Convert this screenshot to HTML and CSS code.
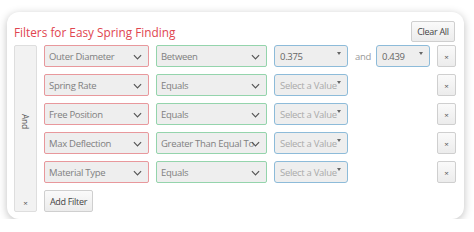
FILE: index.html
```html
<!DOCTYPE html>
<html lang="en">
<head>
    <meta charset="UTF-8">
    <title>Filters for Easy Spring Finding</title>
    <link rel="stylesheet" href="styles.css">
</head>
<body>
    <div class="card">
        <div class="card-head">
            <div class="title">Filters for Easy Spring Finding</div>
            <button class="btn clear-btn">Clear All</button>
        </div>

        <div class="filter-body">
            <!-- And / Or group bar -->
            <div class="group-bar">
                <span class="group-label">And</span>
                <span class="group-x">&times;</span>
            </div>

            <div class="rows">
                <div class="row">
                    <div class="sel field-sel">Outer Diameter<svg class="chev" viewBox="0 0 10 6"><path d="M1 1l4 4 4-4"/></svg></div>
                    <div class="sel op-sel">Between<svg class="chev" viewBox="0 0 10 6"><path d="M1 1l4 4 4-4"/></svg></div>
                    <div class="sel val-sel filled">0.375<span class="tri"></span></div>
                    <span class="and-txt">and</span>
                    <div class="sel val-sel small filled">0.439<span class="tri"></span></div>
                    <button class="btn x-btn">&times;</button>
                </div>
                <div class="row">
                    <div class="sel field-sel">Spring Rate<svg class="chev" viewBox="0 0 10 6"><path d="M1 1l4 4 4-4"/></svg></div>
                    <div class="sel op-sel">Equals<svg class="chev" viewBox="0 0 10 6"><path d="M1 1l4 4 4-4"/></svg></div>
                    <div class="sel val-sel">Select a Value<span class="tri"></span></div>
                    <button class="btn x-btn">&times;</button>
                </div>
                <div class="row">
                    <div class="sel field-sel">Free Position<svg class="chev" viewBox="0 0 10 6"><path d="M1 1l4 4 4-4"/></svg></div>
                    <div class="sel op-sel">Equals<svg class="chev" viewBox="0 0 10 6"><path d="M1 1l4 4 4-4"/></svg></div>
                    <div class="sel val-sel">Select a Value<span class="tri"></span></div>
                    <button class="btn x-btn">&times;</button>
                </div>
                <div class="row">
                    <div class="sel field-sel">Max Deflection<svg class="chev" viewBox="0 0 10 6"><path d="M1 1l4 4 4-4"/></svg></div>
                    <div class="sel op-sel"><span class="clip">Greater Than Equal To</span><svg class="chev" viewBox="0 0 10 6"><path d="M1 1l4 4 4-4"/></svg></div>
                    <div class="sel val-sel">Select a Value<span class="tri"></span></div>
                    <button class="btn x-btn">&times;</button>
                </div>
                <div class="row">
                    <div class="sel field-sel">Material Type<svg class="chev" viewBox="0 0 10 6"><path d="M1 1l4 4 4-4"/></svg></div>
                    <div class="sel op-sel">Equals<svg class="chev" viewBox="0 0 10 6"><path d="M1 1l4 4 4-4"/></svg></div>
                    <div class="sel val-sel">Select a Value<span class="tri"></span></div>
                    <button class="btn x-btn">&times;</button>
                </div>
                <div class="add-row">
                    <button class="btn add-btn">Add Filter</button>
                </div>
            </div>
        </div>
    </div>
</body>
</html>
```

FILE: styles.css
```css
body {
    margin: 0;
    padding: 12px 10px 0 7px;
    background: #ffffff;
    font-family: "Open Sans", Arial, sans-serif;
    font-size: 9.5px;
    letter-spacing: -0.3px;
    color: #808080;
}

.card {
    width: 457px;
    height: 207px;
    box-sizing: border-box;
    padding: 9px 8px 7px 7px;
    background: #fff;
    border-radius: 12px;
    box-shadow: 0 2px 9px rgba(0, 0, 0, 0.25);
}

.card-head {
    display: flex;
    justify-content: space-between;
    align-items: center;
    height: 21px;
    margin-bottom: 3px;
}

.title {
    color: #e0454f;
    font-size: 11.8px;
    letter-spacing: 0;
    margin-top: 1px;
}

.btn {
    font-family: "Open Sans", Arial, sans-serif;
    letter-spacing: -0.3px;
    background: linear-gradient(#fafafa, #ececec);
    border: 1px solid #cfcfcf;
    border-radius: 2px;
    color: #444;
    padding: 0;
    cursor: pointer;
    box-sizing: border-box;
    flex-shrink: 0;
}

.clear-btn {
    width: 44px;
    height: 21px;
    font-size: 9px;
    margin-right: 1px;
}

.filter-body {
    display: flex;
    gap: 7px;
}

/* left And bar */
.group-bar {
    width: 23px;
    height: 167px;
    flex-shrink: 0;
    box-sizing: border-box;
    background: #f2f2f2;
    border: 1px solid #dedede;
    border-radius: 2px;
    display: flex;
    flex-direction: column;
    align-items: center;
    justify-content: space-between;
    padding: 68px 0 3px;
}

.group-label {
    writing-mode: vertical-rl;
    font-size: 8.5px;
    color: #555;
}

.group-x {
    font-size: 8px;
    color: #555;
}

.rows {
    display: flex;
    flex-direction: column;
    gap: 7px;
    width: 412px;
}

.row {
    display: flex;
    align-items: center;
    gap: 7px;
    height: 22px;
}

.sel {
    height: 22px;
    flex-shrink: 0;
    box-sizing: border-box;
    background: #eeeeee;
    border: 1px solid #ccc;
    border-radius: 2px;
    display: flex;
    align-items: center;
    padding: 0 0 0 4px;
    position: relative;
    white-space: nowrap;
    overflow: hidden;
}

.field-sel {
    width: 105px;
    border-color: #e8989c;
}

.op-sel {
    width: 111px;
    border-color: #94d4ac;
}

.clip {
    overflow: hidden;
    width: 93px;
}

.chev {
    position: absolute;
    right: 6px;
    top: 8px;
    width: 9px;
    height: 6px;
    fill: none;
    stroke: #555;
    stroke-width: 1.3;
}

.val-sel {
    width: 74px;
    border-color: #8dbbd9;
    border-radius: 3px;
    color: #aaa;
    padding-left: 5px;
}

.val-sel.small {
    width: 54px;
}

.val-sel.filled {
    color: #666;
}

.tri {
    position: absolute;
    right: 6px;
    top: 6px;
    width: 0;
    height: 0;
    border-left: 2.5px solid transparent;
    border-right: 2.5px solid transparent;
    border-top: 3px solid #666;
}

.and-txt {
    width: 15px;
    flex-shrink: 0;
    color: #999;
    margin-right: -1px;
}

.x-btn {
    width: 19px;
    height: 22px;
    margin-left: auto;
    font-size: 8px;
    color: #555;
}

.add-row {
    display: flex;
}

.add-btn {
    width: 49px;
    height: 22px;
    font-size: 9px;
}
```
